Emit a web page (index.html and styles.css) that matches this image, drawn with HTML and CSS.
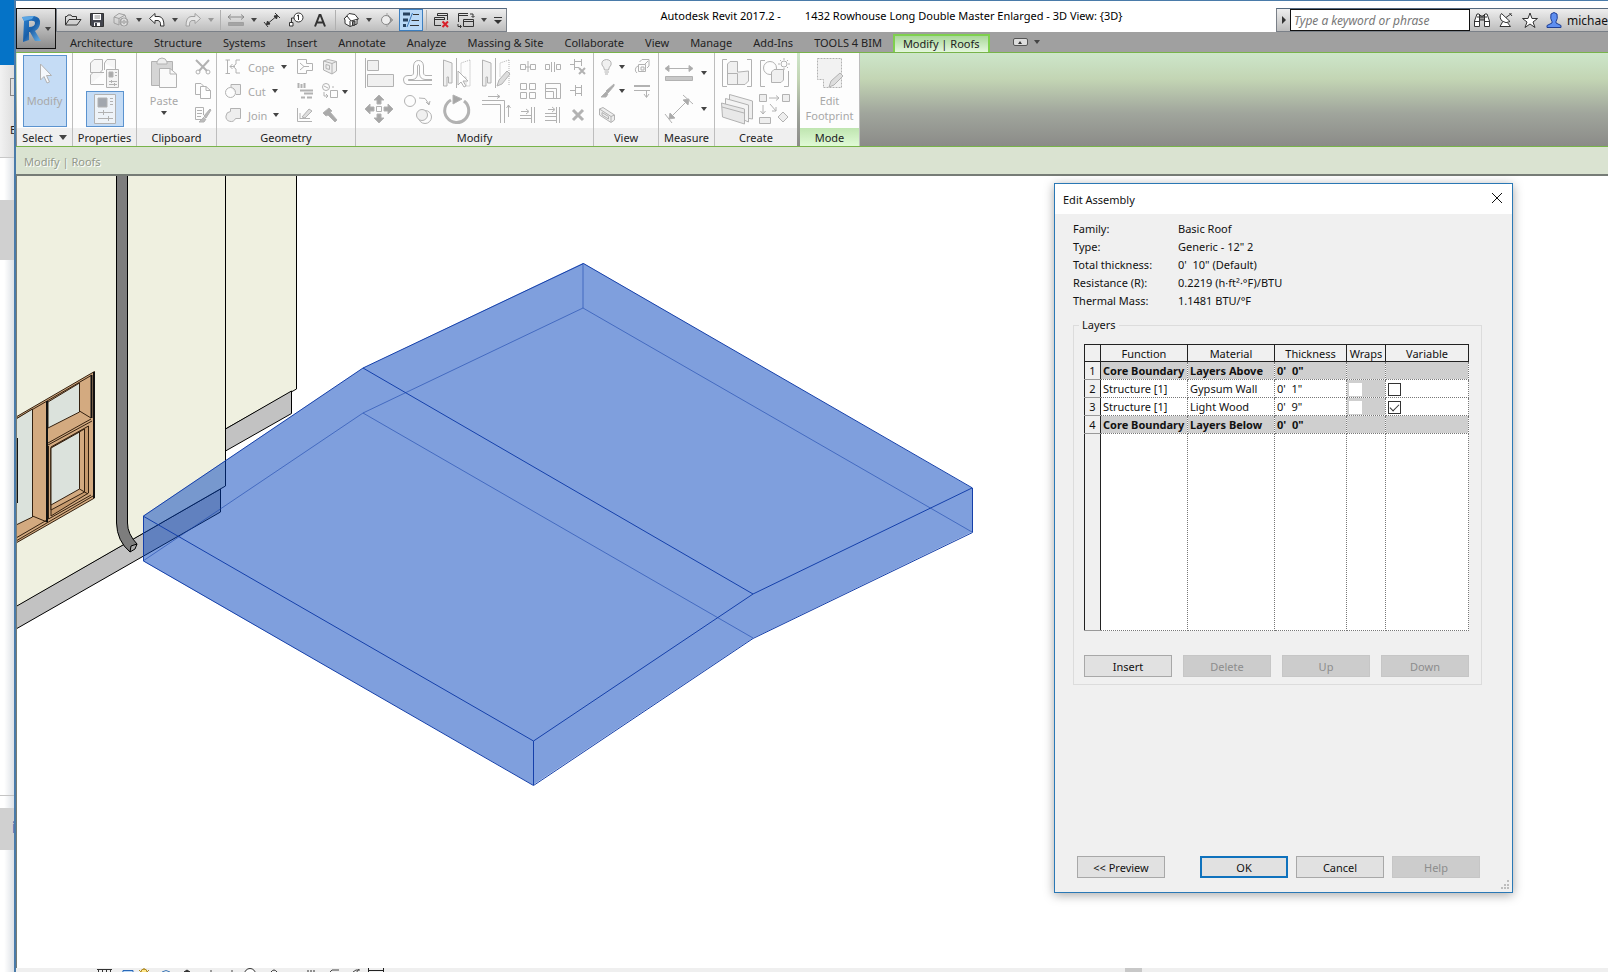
FILE: index.html
```
<!DOCTYPE html>
<html lang="en">
<head>
  <meta charset="UTF-8" />
  <meta name="viewport" content="width=device-width, initial-scale=1.0">
  <title>Autodesk Revit 2017.2</title>
  <link rel="stylesheet" href="styles.css">
</head>
<body>

  <!-- window behind -->
  <div class="behind">
    <div class="behind-title"></div>
    <div class="behind-bar"><i class="behind-box"></i><span>E</span></div>
    <div class="behind-list">
      <div class="behind-thumb"></div>
      <div class="behind-group">
        <div class="behind-row"><b>i</b></div>
      </div>
    </div>
  </div>

  <div class="revit">
    <header class="top">
      <button class="app-btn" aria-label="Application menu">
        <svg width="22" height="28" viewBox="0 0 22 28"><defs><linearGradient id="rg" x1="0" y1="0" x2="1" y2="1"><stop offset="0" stop-color="#2f86d6"/><stop offset=".5" stop-color="#1a5fa8"/><stop offset="1" stop-color="#6cb4ea"/></linearGradient></defs><path d="M1 2 L13 1 Q20 2 19 9 Q18 14 14 16 L20 26 L14 26 L9 17 L8 17 L8 25 L2 27 L3 6 Z M8 6 L8 12 Q14 12 14 8 Q14 5 8 6 Z" fill="url(#rg)" fill-rule="evenodd"/><path d="M1 2 L13 1 L11 4 L3 6Z" fill="#5aa5e4"/></svg>
        <i class="arrow"></i>
      </button>

      <div class="titlebar">
        <div class="qat">
          <button class="q" aria-label="Open"><svg width="18" height="16" viewBox="0 0 18 16"><path d="M1.5 13 V4.500 H3 L4 3 H7 L8 4.500 H12.500 V7 M1.500 13 L5 7.500 H17 L13 13 Z"/></svg></button>
          <button class="q" aria-label="Save"><svg width="16" height="16" viewBox="0 0 16 16"><path d="M1.500 1.500 H14.500 V14.500 H3 L1.500 13 Z" fill="#43454e"/><path d="M4 2 H12 V8 H4Z M5 10.500 H11 V14 H5Z" fill="#fff" stroke="none"/><path d="M5.500 4 H11 M5.500 6 H11" stroke="#888"/><path d="M6 11 H8 V14 H6Z" fill="#43454e" stroke="none"/></svg></button>
          <button class="q dim" aria-label="Synchronize"><svg width="18" height="16" viewBox="0 0 18 16"><path d="M2 5 L7 1.500 L13 3 L14 6 M2 5 V11 L7 13 M7 6 V13 M2 5 L7 6.500 L13 3"/><circle cx="12" cy="10" r="4" fill="#b5b5b5"/><path d="M10 9 A2 2 0 0 1 14 9 M14 11 A2 2 0 0 1 10 11" stroke="#eee"/></svg></button><i class="arrow"></i>
          <button class="q" aria-label="Undo"><svg width="18" height="16" viewBox="0 0 18 16"><path d="M1.500 6.500 L7 1.500 V4.500 H11 Q16 5 16 14 H12.500 Q13 9 10 8.500 H7 V11.500 Z" fill="#fff"/></svg></button><i class="arrow"></i>
          <button class="q dim" aria-label="Redo"><svg width="18" height="16" viewBox="0 0 18 16"><path d="M16.500 6.500 L11 1.500 V4.500 H7 Q2 5 2 14 H5.500 Q5 9 8 8.500 H11 V11.500 Z" fill="#e6e6e6"/></svg></button><i class="arrow faded"></i>
          <i class="sep"></i>
          <button class="q dim" aria-label="Measure"><svg width="18" height="16" viewBox="0 0 18 16"><path d="M1 5 H17 M4 2.500 L1 5 L4 7.500 M14 2.500 L17 5 L14 7.500" stroke="#8a8a8a"/><path d="M1.500 10.500 H16.500 V13.500 H1.500Z" fill="#a4a4a4"/></svg></button><i class="arrow"></i>
          <button class="q" aria-label="Aligned Dimension"><svg width="18" height="16" viewBox="0 0 18 16"><path d="M3 13 L15 3 M1 10 L5 15 M12 1 L17 6"/><path d="M3.500 12.500 L4.500 9 L7 12Z M14.500 3.500 L13.500 7 L11 4Z" fill="#333"/></svg></button>
          <button class="q" aria-label="Tag by Category"><svg width="18" height="16" viewBox="0 0 18 16"><circle cx="11.500" cy="5.500" r="4.500" fill="#fff"/><path d="M7 6 H4.500 V11 M11.500 3 V8 M10 4 L11.500 3"/><path d="M2.500 10.500 H6 V14 H2.500Z" fill="#fff"/></svg></button>
          <button class="q" aria-label="Text"><svg width="16" height="16" viewBox="0 0 16 16"><path d="M3 14.500 L7.500 3 H8.500 L13 14.500 M5 10.500 H11" stroke="#333" stroke-width="2"/></svg></button>
          <i class="sep"></i>
          <button class="q" aria-label="Default 3D View"><svg width="18" height="16" viewBox="0 0 18 16"><path d="M2 7 L7 1.500 L13 2.500 L16.500 7 L15 8 V12 L8 14.500 L3 11.500 V7.500 Z" fill="#fff"/><path d="M2 7 L5 4 L9 9 L16 7 M8 9 V14"/><path d="M10.500 9.500 L13 9 V13 L10.500 13.500Z" fill="#888"/></svg></button><i class="arrow"></i>
          <button class="q dim" aria-label="Section"><svg width="16" height="16" viewBox="0 0 16 16"><path d="M9 3 L14 8 L9 13Z" fill="#9a9a9a"/><circle cx="7" cy="8" r="4.500" fill="#eee" stroke="#888"/><path d="M8 1 V3 M8 13 V15"/></svg></button>
          <button class="q on" aria-label="Thin Lines"><svg width="18" height="16" viewBox="0 0 18 16"><path d="M1 2 H8 M1 8 H6 M1 13.500 H4" stroke="#27415e" stroke-width="3"/><path d="M11 2.500 H17 M9.500 8.500 H17 M8 13.500 H17"/><path d="M10.500 1 L5 15" stroke="#3c78b8"/></svg></button>
          <i class="sep"></i>
          <button class="q" aria-label="Close Hidden Windows"><svg width="18" height="16" viewBox="0 0 18 16"><path d="M4.500 4 V1.500 H14.500 V8 M4.500 3.500 H14 M1.500 5.500 H11.500 V8 M1.500 5.500 V13.500 H8 M1.500 7.500 H11"/><path d="M9.500 9.500 L15 15 M15 9.500 L9.500 15" stroke="#d8202a" stroke-width="2"/></svg></button>
          <button class="q" aria-label="Switch Windows"><svg width="18" height="16" viewBox="0 0 18 16"><path d="M1.500 10 V1.500 H11 M1.500 3.500 H11 M6.500 7.500 H16.500 V14.500 H6.500Z M6.500 9.500 H16 M13 2 H16 V5 M14.500 4 L16 5.500 L17.500 4 M1 12 V14.500 H4 M3 13 L4.500 14.500 L3 16"/></svg></button><i class="arrow"></i>
          <button class="q last" aria-label="Customize"><svg width="10" height="16" viewBox="0 0 10 16"><path d="M1 5.500 H9"/><path d="M1 8 H9 L5 12Z" fill="#333" stroke="none"/></svg></button>
        </div>
        <div class="title"><span>Autodesk Revit 2017.2 -</span><span>1432 Rowhouse Long Double Master Enlarged - 3D View: {3D}</span></div>
        <div class="infocenter">
          <button class="expand" aria-label="Collapse search"><i></i></button>
          <input type="text" placeholder="Type a keyword or phrase" aria-label="Search">
          <button class="q" aria-label="Find"><svg width="18" height="16" viewBox="0 0 18 16"><path d="M1.500 14.500 V9 L4 2 H6 L8 4 H10 L12 2 H14 L16.500 9 V14.500 H11.500 V8 H6.500 V14.500 Z M1.500 9.500 H6 M12 9.500 H16.500 M4 5 H14 M6.500 3 V8 M11.500 3 V8 M8 4 V8 M10 4 V8" fill="#fff"/></svg></button>
          <button class="q" aria-label="Communication Center"><svg width="18" height="16" viewBox="0 0 18 16"><path d="M5.500 10 L3 14.500 H13.500 L10 10" fill="#fff"/><path d="M4.500 1.500 Q1.500 5 5 9 Q9 12 13 9.500 Z" fill="#fff"/><path d="M9 5.500 L14.500 1.500 M12.500 1 L15 4"/></svg></button>
          <button class="q" aria-label="Favorites"><svg width="18" height="17" viewBox="0 0 18 17"><path d="M9 1 L11 6.500 H16.500 L12 10 L14 15.500 L9 12 L4 15.500 L6 10 L1.500 6.500 H7Z" fill="#fff"/></svg></button>
          <button class="q" aria-label="Account"><svg width="18" height="17" viewBox="0 0 18 17"><path d="M6 2 Q9 -1 12 2 Q13 7 11 9.500 V11 L16 13.500 V15.500 H2 V13.500 L7 11 V9.500 Q5 7 6 2Z" fill="#5f8ff0" stroke="#1f3f94"/></svg></button>
          <span>michael</span>
        </div>
      </div>

      <nav class="tabs">
        <a href="#">Architecture</a>
        <a href="#">Structure</a>
        <a href="#">Systems</a>
        <a href="#">Insert</a>
        <a href="#">Annotate</a>
        <a href="#">Analyze</a>
        <a href="#">Massing &amp; Site</a>
        <a href="#">Collaborate</a>
        <a href="#">View</a>
        <a href="#">Manage</a>
        <a href="#">Add-Ins</a>
        <a href="#">TOOLS 4 BIM</a>
        <a href="#" class="active">Modify | Roofs</a>
        <button class="min" aria-label="Minimize ribbon"><i></i></button><i class="arrow"></i>
      </nav>
    </header>

    <section class="ribbon">
      <div class="panel select">
        <div class="tools">
          <button class="big pressed"><svg width="20" height="26" viewBox="0 0 20 26"><path d="M5.500 2 V18 L9 14.500 L12 21 L14.500 20 L11.500 13.500 H16.500 Z" fill="#f5f8fc"/></svg>Modify</button>
        </div>
        <h3>Select <i class="arrow wide"></i></h3>
      </div>

      <div class="panel props">
        <div class="tools large one">
          <button aria-label="Type Properties"><svg width="32" height="32" viewBox="0 0 32 32"><path d="M1.500 6 L5 2.500 H13.500 V13 L11 15.500 H1.500Z M15.500 6 L18 2.500 H26.500 V12 M15.500 6 V13 M1.500 27 V18 L4 15.500 H15 M1.500 27.500 H15" fill="#f6f6f6"/><path d="M17.500 12.500 H29.500 V30.500 H17.500Z" fill="#f4f4f4"/><path d="M20 15 H24 V20 H20Z" fill="#aaa"/><path d="M26 15.500 H28 M26 18.500 H28 M20 24.500 H28 M20 27.500 H28 M22.500 23 V26 M25.500 26 V29"/></svg></button>
          <button class="pressed" aria-label="Properties"><svg width="32" height="32" viewBox="0 0 32 32"><path d="M5.500 1.500 H26.500 V30.500 H5.500Z" fill="#eef3f8"/><path d="M9 5 H18 V14 H9Z" fill="#a2a7ae"/><path d="M21 5.500 H24 M21 8.500 H24 M21 11.500 H24 M9 19.500 H24 M9 25.500 H24 M14.500 17 V22 M19.500 23 V28"/></svg></button>
        </div>
        <h3>Properties</h3>
      </div>

      <div class="panel clip">
        <div class="tools">
          <button class="big paste"><svg width="28" height="32" viewBox="0 0 28 32"><path d="M1.500 4.500 H22.500 V28.500 H1.500Z" fill="#d5d5d5"/><path d="M7 5 Q8 1 12 1 Q16 1 17 5 V7 H7Z" fill="#eee"/><path d="M9.500 11.500 H20 L26.500 17 V30.500 H9.500Z" fill="#fafafa"/><path d="M20 11.500 V17 H26.500"/></svg>Paste<i class="arrow"></i></button>
          <div class="small c1">
            <button aria-label="Cut to Clipboard"><svg width="18" height="18" viewBox="0 0 18 18"><path d="M2 2 L13 13 M15 2 L5 13" stroke-width="2"/><circle cx="4" cy="14" r="2"/><circle cx="14" cy="14" r="2"/></svg></button>
            <button aria-label="Copy to Clipboard"><svg width="18" height="18" viewBox="0 0 18 18"><path d="M1.500 1.500 H7 L9.500 4 V12.500 H1.500Z"/><path d="M6.500 4.500 H12 L16.500 8.500 V16.500 H6.500Z M12 4.500 V8.500 H16.500" fill="#fff"/></svg></button>
            <button aria-label="Match Type"><svg width="18" height="18" viewBox="0 0 18 18"><path d="M8 13.500 H1.500 V1.500 H9.500 V9 M3 4.500 H8 M3 7.500 H8 M3 10.500 H7"/><path d="M16 3 L10 10 L12 12 L17 4Z M10 11 L5 16 H10 L12 13" fill="#bbb"/></svg></button>
          </div>
        </div>
        <h3>Clipboard</h3>
      </div>

      <div class="panel geom">
        <div class="tools">
          <div class="labeled">
            <button><svg width="18" height="18" viewBox="0 0 18 18"><path d="M1.500 2 H6 M1.500 15.500 H6 M3.500 2 V15 M6 8.500 H11 M8.500 6 L6 8.500 L8.500 11 M16 2 H12 V6 L9 8.500 L12 11 V15 H16"/></svg>Cope<i class="arrow"></i></button>
            <button><svg width="18" height="18" viewBox="0 0 18 18"><path d="M7 5 V2.500 H16.500 V12.500 H12" fill="#eee"/><circle cx="6.500" cy="10.500" r="5"/></svg>Cut<i class="arrow"></i></button>
            <button><svg width="18" height="18" viewBox="0 0 18 18"><path d="M6.500 5.500 V2.500 H16.500 V12.500 H11.500 A5 5 0 1 1 6.500 5.500" fill="#eee"/></svg>Join<i class="arrow"></i></button>
          </div>
          <div class="small c1">
            <button aria-label="Wall Joins"><svg width="18" height="18" viewBox="0 0 18 18"><path d="M1.500 1.500 H10.500 V5.500 H16.500 V12.500 H10.500 V15.500 H1.500Z M4 5 L8 8.500 L4 12 M8 8.500 H13"/></svg></button>
            <button aria-label="Beam Joins"><svg width="18" height="18" viewBox="0 0 18 18"><path d="M2.500 1 V6 M5.500 2 V6 M8.500 1 V6 M4 8.500 H17 M8 11.500 H17 M5 15.500 H9 M11 15.500 H16" stroke-width="2"/></svg></button>
            <button aria-label="Split Face"><svg width="18" height="18" viewBox="0 0 18 18"><path d="M1.500 2 V15.500 H16 M3.500 12.500 H14 M4 7 V12"/><path d="M6 11 L13 3 L16 5 L9 12Z" fill="#ddd"/></svg></button>
          </div>
          <div class="small c1">
            <button aria-label="Paint"><svg width="18" height="18" viewBox="0 0 18 18"><path d="M2.500 3 L7 1.500 L15.500 3.500 V13 L11 16 L2.500 12Z" fill="#eee"/><path d="M2.500 3 L11 5.500 L15.500 3.500 M11 5 V16 M5 6.500 L8.500 7.500 V11.500 L5 10.500Z"/></svg></button>
            <button aria-label="Demolish"><svg width="18" height="18" viewBox="0 0 18 18"><circle cx="5" cy="5" r="3.500"/><path d="M3 4 L7 6 M9.500 8.500 H16.500 V15.500 H9.500Z M3 10 V14 H6 M5 12 L7 14 L5 16 M11 5 L13 5"/></svg></button>
            <button aria-label="Hammer"><svg width="18" height="18" viewBox="0 0 18 18"><path d="M2 7 L8 2 L11 5 L9 6 L16 14 L14 16 L7 9 L5 10Z" fill="#aaa"/></svg></button>
          </div>
          <i class="arrow"></i>
        </div>
        <h3>Geometry</h3>
      </div>

      <div class="panel modify">
        <div class="tools">
          <div class="large four">
            <button aria-label="Align"><svg width="32" height="32" viewBox="0 0 32 32"><path d="M2.500 1 V31"/><path d="M4.500 3.500 H15.500 V13.500 H4.500Z M4.500 17.500 H30.500 V29.500 H4.500Z" fill="#f0f0f0"/></svg></button>
            <button aria-label="Offset"><svg width="32" height="32" viewBox="0 0 32 32"><path d="M30 27.500 H5 Q1.500 27 1.500 23 Q1.500 18.500 6 18.500 H9 Q12 18.500 11.500 14 V9 Q12 3.500 16.500 3.500 Q21 3.500 21.500 9 V14 Q21 18.500 24 18.500 H30"/><path d="M30 23.500 H7 Q5 23 7 22.500 H11 Q15 22 15.500 17 V9 Q16.500 6 17.500 9 V17 Q18 22 23 22.500 H30"/></svg></button>
            <button aria-label="Mirror Pick Axis"><svg width="32" height="32" viewBox="0 0 32 32"><path d="M2.500 3 L11 6 V26 H7.500 V20 H6 V29 H2.500Z" fill="#f0f0f0"/><path d="M15.500 1 V31"/><path d="M29 3 L20 6 V26 H23 V20 H25 V29 H29Z" stroke-dasharray="1 1"/><path d="M17 14 V28 L20 25 L23 30 L25 29 L22 24 H27Z" fill="#fff"/></svg></button>
            <button aria-label="Mirror Draw Axis"><svg width="32" height="32" viewBox="0 0 32 32"><path d="M2.500 3 L11 6 V26 H7.500 V20 H6 V29 H2.500Z" fill="#f0f0f0"/><path d="M15.500 1 V31"/><path d="M29 3 L20 6 V20 M29 3 V28" stroke-dasharray="1 1"/><path d="M17 29 L19 23 L27 14 L30 17 L22 27Z" fill="#ddd"/></svg></button>
            <button aria-label="Move"><svg width="32" height="32" viewBox="0 0 32 32"><path d="M13.500 13.500 H18.500 V18.500 H13.500Z"/><path d="M16 2 L21 7 H18 V11 H14 V7 H11Z M16 30 L21 25 H18 V21 H14 V25 H11Z M2 16 L7 11 V14 H11 V18 H7 V21Z M30 16 L25 11 V14 H21 V18 H25 V21Z" fill="#a6a6a6"/></svg></button>
            <button aria-label="Copy"><svg width="32" height="32" viewBox="0 0 32 32"><circle cx="8" cy="8" r="5.500"/><path d="M17 5 L23 5.500 L27 11 M24 9 L27 12 L28 8"/><circle cx="23" cy="24" r="6.500"/><circle cx="20" cy="22" r="5.500" fill="#f0f0f0"/></svg></button>
            <button aria-label="Rotate"><svg width="32" height="32" viewBox="0 0 32 32"><path d="M10 7 A12 12 0 1 0 23 8" stroke-width="3" stroke="#b2b2b2"/><path d="M12 2 L21 6 L12 11Z" fill="#a6a6a6"/></svg></button>
            <button aria-label="Trim"><svg width="32" height="32" viewBox="0 0 32 32"><path d="M2 7.500 H24.500 V30 M2 11.500 H20.500 V30 M8 3.500 H20 M17 1.500 L20 3.500 L17 5.500 M28.500 24 V12 M26.500 15 L28.500 12 L30.500 15"/></svg></button>
          </div>
          <div class="small c3">
            <button aria-label="Split Element"><svg width="18" height="18" viewBox="0 0 18 18"><path d="M1.500 6.500 H6.500 V11.500 H1.500Z M11.500 6.500 H16.500 V11.500 H11.500Z M9 3 V14 M7 9 H11"/></svg></button>
            <button aria-label="Split with Gap"><svg width="18" height="18" viewBox="0 0 18 18"><path d="M1.500 6.500 H5.500 V11.500 H1.500Z M12.500 6.500 H16.500 V11.500 H12.500Z M7.500 4 V14 M10.500 4 V14"/></svg></button>
            <button aria-label="Unpin"><svg width="18" height="18" viewBox="0 0 18 18"><path d="M1 6.500 H5 M5.500 1 V12 M5.500 3.500 H12 M5.500 9.500 H10 M12.500 1 V8"/><path d="M10 10 L16 16 M16 10 L10 16" stroke-width="2"/></svg></button>
            <button aria-label="Array"><svg width="18" height="18" viewBox="0 0 18 18"><path d="M1.500 1.500 H7.500 V7.500 H1.500Z M10.500 1.500 H16.500 V7.500 H10.500Z M1.500 10.500 H7.500 V16.500 H1.500Z M10.500 10.500 H16.500 V16.500 H10.500Z"/></svg></button>
            <button aria-label="Scale"><svg width="18" height="18" viewBox="0 0 18 18"><path d="M1.500 1.500 H16.500 V16.500 H1.500Z M1.500 9.500 H9.500 V16.500 M1.500 6.500 H12.500 V16.500"/></svg></button>
            <button aria-label="Pin"><svg width="18" height="18" viewBox="0 0 18 18"><path d="M1 8.500 H6 M6.500 3 V14 M6.500 5.500 H12 M6.500 11.500 H12 M12.500 3 V14"/></svg></button>
            <button aria-label="Trim Single"><svg width="18" height="18" viewBox="0 0 18 18"><path d="M2 5.500 H9 M7 3 L10 5.500 L7 8 M1 9.500 H12 M1 12.500 H12 M12.500 1 V17 M15.500 1 V17"/></svg></button>
            <button aria-label="Trim Multiple"><svg width="18" height="18" viewBox="0 0 18 18"><path d="M4 3.500 H10 M8 1 L11 3.500 L8 6 M1 7.500 H12 M1 10.500 H12 M1 14.500 H12 M12.500 1 V17 M15.500 1 V17"/></svg></button>
            <button aria-label="Delete element"><svg width="18" height="18" viewBox="0 0 18 18"><path d="M4 4 L14 14 M14 4 L4 14" stroke-width="3"/></svg></button>
          </div>
        </div>
        <h3>Modify</h3>
      </div>

      <div class="panel view">
        <div class="tools">
          <div class="small arrows">
            <button aria-label="Hide"><svg width="18" height="18" viewBox="0 0 18 18"><path d="M6.500 12 Q6 9 4 7 Q3 2 8.500 1.500 Q14 2 13 7 Q11 9 10.500 12 Z M6.500 14 H11 M7 16 H10" fill="#f0f0f0"/></svg><i class="arrow"></i></button>
            <button aria-label="Override"><svg width="18" height="18" viewBox="0 0 18 18"><path d="M16 2 L8 9 L10 11 L16 4Z M8 10 L3 15 L8 15 L10 12Z" fill="#aaa"/></svg><i class="arrow"></i></button>
            <button aria-label="Box"><svg width="18" height="18" viewBox="0 0 18 18"><path d="M1.500 3 L5 1.500 L16.500 9 V14 L13 16.500 L1.500 9Z" fill="#eee"/><path d="M1.500 3 L13 10.500 L16.500 9 M13 10.500 V16 M4 6.500 L10.500 10.500 V13 L4 9Z"/></svg></button>
          </div>
          <div class="small c1">
            <button aria-label="Displace"><svg width="18" height="18" viewBox="0 0 18 18"><path d="M6.500 4 L9 1.500 H16 V8 L14 10 M5.500 6.500 H12.500 V13.500 H5.500Z M5 8 A4 4 0 0 0 4 15 M8 9 H11 V12 H8Z M12 6 L15 3"/></svg></button>
            <button aria-label="Linework"><svg width="18" height="18" viewBox="0 0 18 18"><path d="M1 4 H17" stroke-width="2"/><path d="M1 8.500 H17 M13.500 8 V15 M11 12 L13.500 15.500 L16 12"/></svg></button>
          </div>
        </div>
        <h3>View</h3>
      </div>

      <div class="panel measure">
        <div class="tools large one">
          <button aria-label="Measure Between"><svg width="32" height="32" viewBox="0 0 32 32"><path d="M3 11.500 H29"/><path d="M2 11.500 L6 8.500 V14.500Z M30 11.500 L26 8.500 V14.500Z" fill="#aaa"/><path d="M2.500 19.500 H29.500 V23.500 H2.500Z" fill="#c8c8c8"/></svg><i class="arrow"></i></button>
          <button aria-label="Dimension"><svg width="32" height="32" viewBox="0 0 32 32"><path d="M6 26 L26 6 M2 21 L9 30 M20 2 L30 11"/><path d="M6 26 L7 20 L12 25Z M26 6 L25 12 L20 7Z" fill="#aaa"/></svg><i class="arrow"></i></button>
        </div>
        <h3>Measure</h3>
      </div>

      <div class="panel create">
        <div class="tools large two">
          <button aria-label="Create Assembly"><svg width="32" height="32" viewBox="0 0 32 32"><path d="M6 2.500 H1.500 V29.500 H6 M26 2.500 H30.500 V29.500 H26"/><path d="M6.500 7 L9 4.500 H16.500 V15 H18 L27.500 14 V24 L24 27.500 H6.500Z M6.500 16.500 H16.500 V27" fill="#f0f0f0"/></svg></button>
          <button aria-label="Create Parts"><svg width="32" height="32" viewBox="0 0 32 32"><path d="M6 3.500 H1.500 V29.500 H6 M25 29.500 H29.500 V14"/><circle cx="11" cy="11" r="6.500"/><path d="M12.500 15 L15 12.500 H24.500 V23 L22 25.500 H12.500Z" fill="#f0f0f0"/><circle cx="25" cy="7" r="3"/><path d="M25 1 V3 M25 11 V13 M19 7 H21 M29 7 H31 M21 3 L22 4 M29 3 L28 4 M29 11 L28 10"/></svg></button>
          <button aria-label="Create Group"><svg width="32" height="32" viewBox="0 0 32 32"><path d="M8.500 11 V1.500 L31.500 8 V26 L25 25Z" fill="#eee"/><path d="M4.500 11 V5.500 L27.500 12 V29 L23 27Z" fill="#f4f4f4"/><path d="M.5 10 L23.500 16 V31 L1.500 24Z M1 14 L23 20" fill="#e8e8e8"/></svg></button>
          <button aria-label="Create Similar"><svg width="32" height="32" viewBox="0 0 32 32"><path d="M.5 1.500 H7.500 V8.500 H.5Z M23.500 1.500 H30.500 V8.500 H23.500Z M.5 24.500 H11.500 V30.500 H.5Z M24 19 L29 24 L24 29 L19 24Z" fill="#eee"/><path d="M10 5 H20 M17 2.500 L20 5 L17 7.500 M4 12 V21 M1.500 18 L4 21 L6.500 18 M11 11 L17 18 M17 14 V18 H13"/></svg></button>
        </div>
        <h3>Create</h3>
      </div>

      <div class="panel mode">
        <div class="tools">
          <button class="big paste"><svg width="28" height="32" viewBox="0 0 28 32"><path d="M1.500 1.500 H25.500 V30.500 H7.500 V22.500 H1.500Z" fill="#f2f2f2" stroke-dasharray="2 1"/><path d="M13 30 L15 24 L24 16 L27 19 L18 28Z" fill="#ddd"/></svg>Edit<br>Footprint</button>
        </div>
        <h3>Mode</h3>
      </div>
    </section>

    <div class="options">Modify | Roofs</div>

    <main class="canvas">
      <svg class="scene" aria-label="3D view">
        <g transform="translate(-17 -176)">
          <!-- walls -->
          <g stroke="#000">
            <path d="M225.500 175 H296.500 V389 L225.500 429Z" fill="#eff0e0"/>
            <path d="M225.500 429 L291.500 391 V413.500 L225.500 451Z" fill="#c2c2c2"/>
            <path d="M16 606 L220.500 489 V512 L16 629Z" fill="#c2c2c2"/>
            <path d="M16 175 H225.500 V486 L16 606.500Z" fill="#eff0e0"/>
            <path d="M116.500 175 V523 Q117 541 130 552 L137 544 Q127.500 534 127.500 523 V175" fill="#7d7d7d"/>
            <path d="M130 552 L131 546 L137 544 L135 549Z" fill="#aaa"/>
          </g>
          <!-- window -->
          <g stroke="#33200f" stroke-width="1">
            <path d="M16 417 L94.500 371.500 V498 L16 543Z" fill="#d3aa80"/>
            <path d="M16 419 L92 375 M16 541 L93 496 M16 538 L47 520" fill="none"/>
            <path d="M16 419 L32.500 409 V517 L16 525Z" fill="#dbe2dc"/>
            <path d="M48 402 L79.500 383 V412 L48 428Z" fill="#dbe2dc"/>
            <path d="M32.500 516 L47 522 M79.500 411 L91 418 M48 443 L91 419 M48 445 L92 421" fill="none"/>
            <path d="M51 447 L88.500 426 V493 L51 516Z" fill="#c69a6e"/>
            <path d="M51 448 L84.500 429 V492 L51 510Z" fill="#d3aa80"/>
            <path d="M51 448 L79.500 432 V489 L51 505Z" fill="#dbe2dc"/>
            <path d="M79.500 489 L88 494 M48.500 446 V519 L91 495" fill="none"/>
            <path d="M47 401 V522 M91.500 375 V418 M94 372 V498" stroke="#111" stroke-width="2"/>
            <path d="M17.500 438 V503" stroke="#111"/>
          </g>
          <!-- roof -->
          <path d="M583 263 L363 368 L143 516 V561 L533 785 L753 638 L972 532 V488Z" fill="#0040bc" fill-opacity=".5"/>
          <path d="M143 561 L363 413 L583 308 L972 532 M363 413 L753 638 M583 263 V308" fill="none" stroke="#1c47ad" stroke-opacity=".6"/>
          <path d="M583.500 263.500 L363 368 L143.500 516 V561 L533.500 785.500 L753 638.500 L972.500 532.500 V488Z M143 516 L533.500 741 L753 594 L972 488 M363 368 L753 594 M533.500 741 V785" fill="none" stroke="#1540aa"/>
        </g>
      </svg>

      <div class="dialog" role="dialog" aria-labelledby="dlg-title">
        <div class="dialog-title">
          <span id="dlg-title">Edit Assembly</span>
          <button aria-label="Close"><svg width="12" height="12" viewBox="0 0 12 12"><path d="M1 1 L11 11 M11 1 L1 11" stroke="#111"/></svg></button>
        </div>
        <div class="dialog-body">
          <dl>
            <dt>Family:</dt><dd>Basic Roof</dd>
            <dt>Type:</dt><dd>Generic - 12" 2</dd>
            <dt>Total thickness:</dt><dd>0'&nbsp; 10" (Default)</dd>
            <dt>Resistance (R):</dt><dd>0.2219 (h·ft²·°F)/BTU</dd>
            <dt>Thermal Mass:</dt><dd>1.1481 BTU/°F</dd>
          </dl>

          <fieldset>
            <legend>Layers</legend>
            <table>
              <colgroup><col class="w-num"><col class="w-name"><col class="w-name"><col class="w-thick"><col class="w-wrap"><col></colgroup>
              <thead>
                <tr><th></th><th>Function</th><th>Material</th><th>Thickness</th><th>Wraps</th><th>Variable</th></tr>
              </thead>
              <tbody>
                <tr class="core"><th>1</th><td>Core Boundary</td><td>Layers Above</td><td>0'&nbsp; 0"</td><td></td><td></td></tr>
                <tr><th>2</th><td>Structure [1]</td><td>Gypsum Wall</td><td>0'&nbsp; 1"</td><td class="off"><input type="checkbox" disabled aria-label="Wraps 2"></td><td><input type="checkbox" aria-label="Variable 2"></td></tr>
                <tr><th>3</th><td>Structure [1]</td><td>Light Wood</td><td>0'&nbsp; 9"</td><td class="off"><input type="checkbox" disabled aria-label="Wraps 3"></td><td><input type="checkbox" checked aria-label="Variable 3"></td></tr>
                <tr class="core"><th>4</th><td>Core Boundary</td><td>Layers Below</td><td>0'&nbsp; 0"</td><td></td><td></td></tr>
                <tr class="rest"><th></th><td></td><td></td><td></td><td></td><td></td></tr>
              </tbody>
            </table>
            <div class="row-btns">
              <button class="btn">Insert</button>
              <button class="btn" disabled>Delete</button>
              <button class="btn" disabled>Up</button>
              <button class="btn" disabled>Down</button>
            </div>
          </fieldset>

          <div class="dialog-foot">
            <button class="btn preview">&lt;&lt; Preview</button>
            <button class="btn ok">OK</button>
            <button class="btn">Cancel</button>
            <button class="btn" disabled>Help</button>
          </div>
        </div>
        <svg class="grip" width="10" height="10" viewBox="0 0 10 10"><path d="M7 0h2v2h-2z M7 4h2v2h-2z M4 4h2v2h-2z M7 7h2v2h-2z M4 7h2v2h-2z M1 7h2v2h-2z" fill="#bdbdbd"/></svg>
      </div>
    </main>

    <footer class="viewbar">
      <svg class="view-icons" width="300" height="16" viewBox="0 0 300 16"><path d="M1 1.500 H16 M2.500 1 V15 M6.500 1 V15 M10.500 1 V15 M14.500 1 V15" stroke="#333"/><path d="M27 2.500 H37 V12 H26Z" fill="#bcd8f5" stroke="#2868b8"/><circle cx="48" cy="4" r="3" fill="#ffe88a" stroke="#b08a20"/><path d="M43 2 L45 4 M53 2 L51 4 M48 0 V2" stroke="#b08a20"/><path d="M66 4 Q70 1 74 4" stroke="#3c78b8"/><path d="M88 4 L91 2 L94 4Z" fill="#333" stroke="#333"/><path d="M115 2 V4 M136 2 V4" stroke="#444"/><circle cx="154" cy="6" r="5.500" fill="#fff" stroke="#333"/><path d="M175 4 Q178 0 181 4" stroke="#333"/><path d="M211 3 H219" stroke="#333" stroke-dasharray="2 1"/><path d="M234 4 L236 2 H243 M257 4 L260 2 H264 M263 1 L260 5" stroke="#444"/><path d="M272.500 0 V6 M272 2.500 H288 M287.500 0 V6" stroke="#222"/></svg>
      <i class="hthumb"></i>
    </footer>
  </div>

</body>
</html>
```
FILE: styles.css
```
:root {
  --edge: #4a7ba9;
  --green: #78b34a;
  --ui: "Noto Sans", "Open Sans", sans-serif;
  --line: #b2b2b2;
}

* {
  box-sizing: border-box;
}

body {
  margin: 0;
  height: 100vh;
  display: flex;
  overflow: hidden;
  background: #fff;
  font-family: var(--ui);
  font-size: 11px;
  color: #222;
}

button {
  font: inherit;
  color: inherit;
  background: none;
  border: 0;
  padding: 0;
}

svg {
  fill: none;
  flex: none;
}

h3, dl, dd {
  margin: 0;
  font-size: 11px;
  font-weight: normal;
}

.arrow {
  flex: none;
  border: 3px solid transparent;
  border-top: 4px solid #444;
  border-bottom: 0;
}

.arrow.wide {
  border-width: 5px 4px 0;
}

.arrow.faded {
  border-top-color: #999;
}

/* window behind */
.behind {
  flex: none;
  width: 14px;
  display: flex;
  flex-direction: column;
  overflow: hidden;
}

.behind-title {
  height: 65px;
  background: #0573c7;
}

.behind-bar {
  height: 93px;
  padding: 13px 0 0 10px;
  background: linear-gradient(to right, #f2f2f2, #dedede);
  border-bottom: 1px solid #c8c8c8;
}

.behind-box {
  display: block;
  height: 18px;
  margin-bottom: 26px;
  border: 1px solid #888;
  border-right: 0;
}

.behind-list {
  flex: 1;
  display: flex;
  flex-direction: column;
  justify-content: space-between;
  padding: 42px 0 122px;
  background: linear-gradient(to right, #fff 30%, #dde1e6);
}

.behind-thumb {
  height: 60px;
  background: #d0d0d0;
}

.behind-group {
  padding-top: 12px;
  border-top: 1px solid #c4c4c4;
}

.behind-row {
  height: 42px;
  padding: 8px 0 0 12px;
  background: #d0d0d0;
  color: #1a6fb5;
  font-size: 16px;
}

/* main window */
.revit {
  flex: 1;
  min-width: 0;
  display: flex;
  flex-direction: column;
  border-top: 1px solid var(--edge);
  border-left: 2px solid var(--edge);
}

.top {
  display: grid;
  grid-template-columns: 40px minmax(0, 1fr);
  grid-template-rows: 31px 20px;
  background: linear-gradient(#fff 31px, #a0a0a0 31px);
}

.app-btn {
  grid-row: 1 / 3;
  margin: 7px 0 3px;
  display: flex;
  align-items: center;
  justify-content: center;
  gap: 2px;
  border: 1px solid #111;
  background: linear-gradient(#e4e4e4, #8c8c8c);
}

.titlebar {
  display: flex;
  padding-top: 7px;
}

.qat,
.infocenter {
  display: flex;
  align-items: center;
  border: 1px solid #7a8088;
  border-top-color: #55697f;
  background: linear-gradient(#eee, #bdbdbd);
}

.qat {
  padding-left: 4px;
}

.q {
  width: 24px;
  height: 22px;
  display: flex;
  align-items: center;
  justify-content: center;
}

.q svg {
  stroke: #333;
}

.q.dim svg {
  stroke: #a0a0a0;
}

.q.on {
  border: 1px solid #3c7fc0;
  background: #b9d8f6;
}

.q.last {
  width: 16px;
}

.qat .arrow {
  margin: 0 3px;
}

.sep {
  width: 1px;
  height: 20px;
  margin: 0 3px;
  background: #b0b0b0;
}

.title {
  flex: 1;
  display: flex;
  justify-content: center;
  gap: 24px;
  line-height: 16px;
  color: #000;
  white-space: nowrap;
}

.infocenter {
  width: 332px;
  overflow: hidden;
  border-right: 0;
}

.infocenter input {
  flex: none;
  width: 180px;
  height: 22px;
  padding: 0 3px;
  border: 1px solid #111;
  font: italic 12px var(--ui);
}

.infocenter input::placeholder {
  color: #777;
}

.infocenter .q {
  flex: none;
}

.infocenter span {
  padding-left: 1px;
  font-size: 12px;
  color: #111;
}

.expand {
  flex: none;
  width: 13px;
  display: flex;
  justify-content: center;
}

.expand i {
  border: 4px solid transparent;
  border-left-color: #333;
  border-right: 0;
}

.tabs {
  display: flex;
  align-items: center;
  gap: 1px;
  padding-left: 4px;
  white-space: nowrap;
}

.tabs a {
  padding: 0 10px;
  line-height: 17px;
  color: #222;
  text-decoration: none;
}

.tabs .active {
  align-self: flex-end;
  border: 2px solid #7fd04e;
  border-bottom: 0;
  padding: 0 8px 1px;
  line-height: 15px;
  background: linear-gradient(#a9d79a, #e4f7dd);
}

.min {
  width: 15px;
  height: 8px;
  margin: 0 5px 0 22px;
  display: flex;
  align-items: center;
  justify-content: center;
  border: 1px solid #555;
  border-radius: 2px;
  background: #ddd;
}

.min i {
  border: 2px solid transparent;
  border-top: 0;
  border-bottom: 3px solid #333;
}

/* ribbon */
.ribbon {
  display: flex;
  height: 95px;
  padding-left: 1px;
  border-top: 1px solid var(--green);
  border-bottom: 1px solid var(--green);
  background: linear-gradient(#cde6ca, #c3d5b4 28%, #a0a59c 65%, #8b8b88);
}

.panel {
  flex: none;
  display: flex;
  flex-direction: column;
  background: #fdfdfd;
  border-right: 1px solid #bdbdbd;
}

.panel h3 {
  display: flex;
  align-items: center;
  justify-content: center;
  gap: 6px;
  height: 18px;
  background: #efefef;
  color: #222;
}

.tools {
  flex: 1;
  display: flex;
  justify-content: center;
  padding-top: 2px;
}

.tools svg {
  stroke: var(--line);
}

.tools button {
  display: flex;
  align-items: center;
  justify-content: center;
  color: #a8a8a8;
}

.select { width: 56px; }
.props { width: 64px; }
.clip { width: 80px; }
.geom { width: 139px; }
.modify { width: 238px; }
.view { width: 65px; }
.measure { width: 56px; }
.create { width: 82px; }
.mode { width: 60px; }

.tools .big {
  width: 44px;
  height: 72px;
  flex-direction: column;
  justify-content: flex-start;
  padding-top: 6px;
  gap: 5px;
  line-height: 15px;
}

.tools .big.paste {
  padding-top: 2px;
  width: 52px;
  gap: 0;
  text-align: center;
}

.paste svg {
  margin-bottom: 4px;
}

.paste .arrow {
  margin-top: 3px;
}

.tools .pressed {
  border: 1px solid #5b93cf;
  background: #c5dcf5;
}

.large {
  display: grid;
  grid-auto-rows: 36px;
}

.large.one { grid-template-columns: 38px; }
.large.two { grid-template-columns: 38px 38px; }
.large.four { grid-template-columns: repeat(4, 39px); }

.small {
  display: grid;
  grid-auto-rows: 24px;
}

.small.c1 { grid-template-columns: 25px; }
.small.c3 { grid-template-columns: repeat(3, 25px); }

.arrows button {
  justify-content: flex-start;
  gap: 3px;
  width: 31px;
}

.labeled {
  display: grid;
  grid-auto-rows: 24px;
  width: 68px;
}

.labeled button {
  justify-content: flex-start;
  gap: 6px;
}

.geom .tools > .arrow {
  align-self: center;
}

.measure .large {
  justify-content: start;
  grid-template-columns: 52px;
}

.measure button {
  gap: 6px;
}

.create {
  border-right: 0;
}

.mode {
  margin-left: 3px;
}

.mode h3 {
  background: linear-gradient(#bfe5b0, #e0fad6);
}

.options {
  height: 29px;
  padding: 0 8px;
  line-height: 29px;
  background: #dae3d1;
  border-bottom: 2px solid #767c76;
  color: #92988c;
  text-shadow: 1px 1px 0 #fff;
}

/* drawing area */
.canvas {
  flex: 1;
  position: relative;
  min-height: 0;
  background: #fff;
  border-left: 1px solid #767c76;
}

.scene {
  display: block;
  width: 100%;
  height: 100%;
}

.dialog {
  position: absolute;
  top: 7px;
  right: 95px;
  width: 459px;
  height: 710px;
  display: flex;
  flex-direction: column;
  border: 1px solid #2a78b5;
  background: #f0f0f0;
  box-shadow: 0 2px 10px rgba(0, 0, 0, 0.35);
  color: #111;
}

.dialog-title {
  display: flex;
  align-items: center;
  justify-content: space-between;
  height: 30px;
  padding: 0 9px 0 8px;
  background: #fff;
}

.dialog-body {
  flex: 1;
  display: flex;
  flex-direction: column;
  padding: 6px 30px 14px 18px;
}

dl {
  display: grid;
  grid-template-columns: 105px 1fr;
  line-height: 18px;
}

fieldset {
  margin: 6px 0 0;
  padding: 10px 12px 7px 10px;
  border: 1px solid #dcdcdc;
}

legend {
  margin-left: -5px;
  padding: 0 3px;
  line-height: 18px;
}

table {
  width: 100%;
  height: 287px;
  table-layout: fixed;
  border-collapse: collapse;
  background: #fff;
  line-height: 15px;
}

.w-num { width: 16px; }
.w-name { width: 87px; }
.w-thick { width: 72px; }
.w-wrap { width: 39px; }

th {
  padding: 0;
  height: 18px;
  border: 1px solid #222;
  background: #f0f0f0;
  font-weight: normal;
}

thead th {
  height: 17px;
}

tbody th {
  border-top-color: #999;
  border-bottom-color: #999;
}

td {
  padding: 0 2px;
  height: 18px;
  overflow: hidden;
  border: 1px dotted #777;
  white-space: nowrap;
}

.core td {
  background: #cfcfcf;
  font-weight: bold;
}

td.off {
  background: #cfcfcf;
}

.rest th,
.rest td {
  height: auto;
}

input[type="checkbox"] {
  appearance: none;
  display: block;
  width: 13px;
  height: 13px;
  margin: 1px 0 0;
  border: 1px solid #333;
  background: #fff;
}

input[type="checkbox"]:disabled {
  border-color: #fff;
}

input[type="checkbox"]:checked::after {
  content: "";
  display: block;
  width: 8px;
  height: 4px;
  margin: 2px 1px;
  border: solid #333;
  border-width: 0 0 1px 1px;
  transform: rotate(-45deg);
}

.row-btns {
  display: flex;
  justify-content: space-between;
  margin-top: 24px;
}

.btn {
  width: 88px;
  height: 22px;
  border: 1px solid #a8a8a8;
  background: #e1e1e1;
}

.btn:disabled {
  border-color: #c6c6c6;
  background: #cccccc;
  color: #8c8c8c;
}

.btn.ok {
  border: 2px solid #0f72bd;
}

.dialog-foot {
  display: flex;
  gap: 8px;
  margin-top: auto;
  padding: 0 2px 0 4px;
}

.preview {
  margin-right: auto;
}

.grip {
  position: absolute;
  right: 2px;
  bottom: 2px;
}

.viewbar {
  flex: none;
  display: flex;
  height: 4px;
  padding-left: 80px;
  overflow: hidden;
  background: #efefef;
}

.hthumb {
  width: 17px;
  margin-left: 729px;
  background: #c8c8c8;
}
```
